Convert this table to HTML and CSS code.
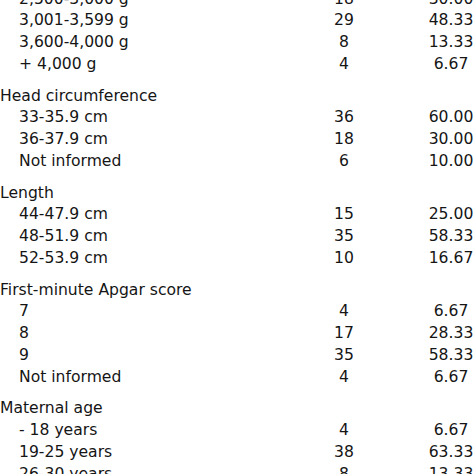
FILE: index.html
```html
<!DOCTYPE html>
<html>
<head>
<meta charset="utf-8">
<link rel="stylesheet" href="styles.css">
</head>
<body>
<div class="table">
  <div class="group">
    <div class="row sub"><span class="label">2,500-3,000 g</span><span class="n">18</span><span class="pct">30.00</span></div>
    <div class="row sub"><span class="label">3,001-3,599 g</span><span class="n">29</span><span class="pct">48.33</span></div>
    <div class="row sub"><span class="label">3,600-4,000 g</span><span class="n">8</span><span class="pct">13.33</span></div>
    <div class="row sub"><span class="label">+ 4,000 g</span><span class="n">4</span><span class="pct">6.67</span></div>
  </div>
  <div class="group">
    <div class="row head"><span class="label">Head circumference</span><span class="n"></span><span class="pct"></span></div>
    <div class="row sub"><span class="label">33-35.9 cm</span><span class="n">36</span><span class="pct">60.00</span></div>
    <div class="row sub"><span class="label">36-37.9 cm</span><span class="n">18</span><span class="pct">30.00</span></div>
    <div class="row sub"><span class="label">Not informed</span><span class="n">6</span><span class="pct">10.00</span></div>
  </div>
  <div class="group">
    <div class="row head"><span class="label">Length</span><span class="n"></span><span class="pct"></span></div>
    <div class="row sub"><span class="label">44-47.9 cm</span><span class="n">15</span><span class="pct">25.00</span></div>
    <div class="row sub"><span class="label">48-51.9 cm</span><span class="n">35</span><span class="pct">58.33</span></div>
    <div class="row sub"><span class="label">52-53.9 cm</span><span class="n">10</span><span class="pct">16.67</span></div>
  </div>
  <div class="group">
    <div class="row head"><span class="label">First-minute Apgar score</span><span class="n"></span><span class="pct"></span></div>
    <div class="row sub"><span class="label">7</span><span class="n">4</span><span class="pct">6.67</span></div>
    <div class="row sub"><span class="label">8</span><span class="n">17</span><span class="pct">28.33</span></div>
    <div class="row sub"><span class="label">9</span><span class="n">35</span><span class="pct">58.33</span></div>
    <div class="row sub"><span class="label">Not informed</span><span class="n">4</span><span class="pct">6.67</span></div>
  </div>
  <div class="group">
    <div class="row head"><span class="label">Maternal age</span><span class="n"></span><span class="pct"></span></div>
    <div class="row sub"><span class="label">- 18 years</span><span class="n">4</span><span class="pct">6.67</span></div>
    <div class="row sub"><span class="label">19-25 years</span><span class="n">38</span><span class="pct">63.33</span></div>
    <div class="row sub"><span class="label">26-30 years</span><span class="n">8</span><span class="pct">13.33</span></div>
  </div>
</div>
</body>
</html>
```
FILE: styles.css
```css
html, body {
  margin: 0;
  padding: 0;
  background: #ffffff;
  overflow: hidden;
}
body {
  width: 474px;
  height: 474px;
  font-family: "DejaVu Sans", Verdana, sans-serif;
  font-size: 15.6px;
  color: #151515;
}
.table {
  display: flex;
  flex-direction: column;
  gap: 10px;
  margin-top: -11.5px;
  width: 520px;
}
.row {
  display: grid;
  grid-template-columns: 300px 88px 126px;
  line-height: 21.75px;
  height: 21.75px;
  white-space: nowrap;
}
.row.sub .label {
  padding-left: 19px;
}
.n, .pct {
  text-align: center;
}
```
